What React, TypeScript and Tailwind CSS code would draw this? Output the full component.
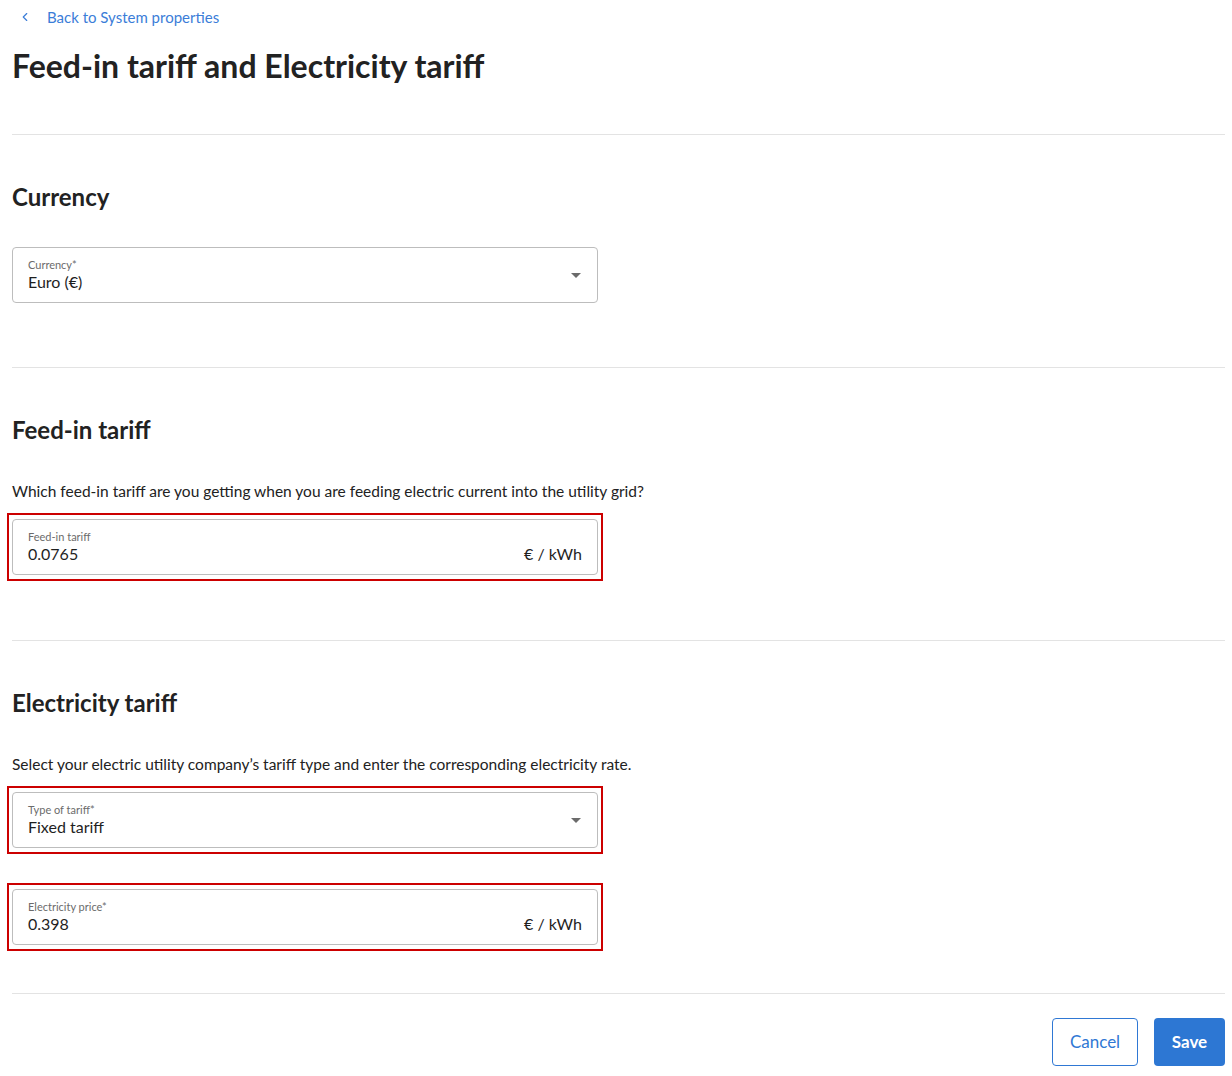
import React from 'react';
import { ChevronLeft } from 'lucide-react';

const FONT = "font-['Lato','Liberation_Sans',sans-serif]";

// red highlight frame drawn around a form field
function Marked({ children }: { children: React.ReactNode }) {
  return <div className="-ml-[5px] w-fit border-2 border-[#cc0000] px-[3px] py-[4px]">{children}</div>;
}

function SelectField({ label, value }: { label: string; value: string }) {
  return (
    <div className="w-[586px] h-[56px] rounded border border-[#bdbdbd] bg-white flex items-center justify-between pl-[15px] pr-[16px]">
      <div className="flex flex-col">
        <span className="text-[11px] leading-[14px] text-[#6b6b6b]">{label}</span>
        <span className="text-[16px] leading-[20px] text-[#1f1f1f]">{value}</span>
      </div>
      <svg width="10" height="5" viewBox="0 0 10 5">
        <path d="M0 0h10L5 5z" fill="#6b6b6b" />
      </svg>
    </div>
  );
}

function InputField({ label, value, unit }: { label: string; value: string; unit: string }) {
  return (
    <div className="w-[586px] h-[56px] rounded border border-[#bdbdbd] bg-white flex flex-col justify-center pl-[15px] pr-[15px]">
      <span className="text-[11px] leading-[14px] text-[#6b6b6b]">{label}</span>
      <div className="flex justify-between text-[16px] leading-[20px] text-[#1f1f1f]">
        <span>{value}</span>
        <span>{unit}</span>
      </div>
    </div>
  );
}

export default function App() {
  return (
    <div className={`min-h-screen bg-white pl-[12px] pr-[7px] ${FONT} text-[#222]`}>
      {/* Back link */}
      <a href="#" className="flex items-center h-[24px] mt-[5px] text-[15px] text-[#3b7dd8]">
        <ChevronLeft size={14} strokeWidth={2} className="ml-[6px] mr-[15px]" />
        Back to System properties
      </a>

      <h1 className="mt-[17px] text-[32px] leading-[40px] font-bold text-[#222]">
        Feed-in tariff and Electricity tariff
      </h1>

      <div className="mt-[48px] border-t border-[#e3e3e3]" />

      {/* Currency */}
      <h2 className="mt-[46px] text-[24px] leading-[32px] font-bold">Currency</h2>
      <div className="mt-[34px]">
        <SelectField label="Currency*" value="Euro (€)" />
      </div>

      <div className="mt-[64px] border-t border-[#e3e3e3]" />

      {/* Feed-in tariff */}
      <h2 className="mt-[46px] text-[24px] leading-[32px] font-bold">Feed-in tariff</h2>
      <p className="mt-[33px] text-[15.5px] leading-[24px]">
        Which feed-in tariff are you getting when you are feeding electric current into the utility grid?
      </p>
      <div className="mt-[10px]">
        <Marked>
          <InputField label="Feed-in tariff" value="0.0765" unit="€ / kWh" />
        </Marked>
      </div>

      <div className="mt-[59px] border-t border-[#e3e3e3]" />

      {/* Electricity tariff */}
      <h2 className="mt-[46px] text-[24px] leading-[32px] font-bold">Electricity tariff</h2>
      <p className="mt-[33px] text-[15.5px] leading-[24px]">
        Select your electric utility company’s tariff type and enter the corresponding electricity rate.
      </p>
      <div className="mt-[10px]">
        <Marked>
          <SelectField label="Type of tariff*" value="Fixed tariff" />
        </Marked>
      </div>
      <div className="mt-[29px]">
        <Marked>
          <InputField label="Electricity price*" value="0.398" unit="€ / kWh" />
        </Marked>
      </div>

      <div className="mt-[42px] border-t border-[#e3e3e3]" />

      <div className="mt-[24px] flex justify-end gap-[16px]">
        <button className="h-[48px] w-[86px] rounded border border-[#2f78d4] text-[#2f78d4] text-[17px] bg-white">
          Cancel
        </button>
        <button className="h-[48px] w-[71px] rounded bg-[#2d77d3] text-white text-[17px] font-bold">
          Save
        </button>
      </div>
    </div>
  );
}
